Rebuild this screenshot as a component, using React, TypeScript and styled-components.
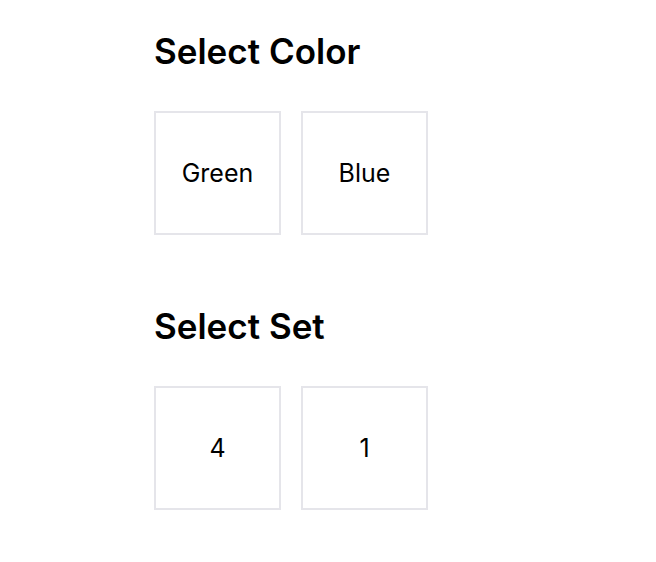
import React from 'react';
import styled, { createGlobalStyle } from 'styled-components';

const GlobalStyle = createGlobalStyle`
  body {
    margin: 0;
    background: #ffffff;
    font-family: Inter, "Noto Sans", sans-serif;
    color: #000000;
  }
`;

const Page = styled.div`
  display: flex;
  flex-direction: column;
  gap: 71px;
  padding: 31px 0 0 154px;
`;

const Section = styled.section`
  display: flex;
  flex-direction: column;
  gap: 40px;
`;

const Heading = styled.h2`
  margin: 0;
  font-size: 35px;
  font-weight: 600;
  line-height: 40px;
`;

const OptionRow = styled.div`
  display: flex;
  gap: 20px;
`;

const Option = styled.button<{ $selected?: boolean }>`
  width: 127px;
  height: 124px;
  box-sizing: border-box;
  display: flex;
  align-items: center;
  justify-content: center;
  background: #ffffff;
  border: 2px solid ${(p) => (p.$selected ? '#000000' : '#e5e5ea')};
  font-family: Inter, "Noto Sans", sans-serif;
  font-size: 25px;
  font-weight: 400;
  color: #000000;
  padding: 0;
  cursor: pointer;
`;

const groups = [
  { title: 'Select Color', options: ['Green', 'Blue'] },
  { title: 'Select Set', options: ['4', '1'] },
];

export default function App() {
  return (
    <>
      <GlobalStyle />
      <Page>
        {groups.map((g) => (
          <Section key={g.title}>
            <Heading>{g.title}</Heading>
            <OptionRow>
              {g.options.map((o) => (
                <Option key={o}>{o}</Option>
              ))}
            </OptionRow>
          </Section>
        ))}
      </Page>
    </>
  );
}
